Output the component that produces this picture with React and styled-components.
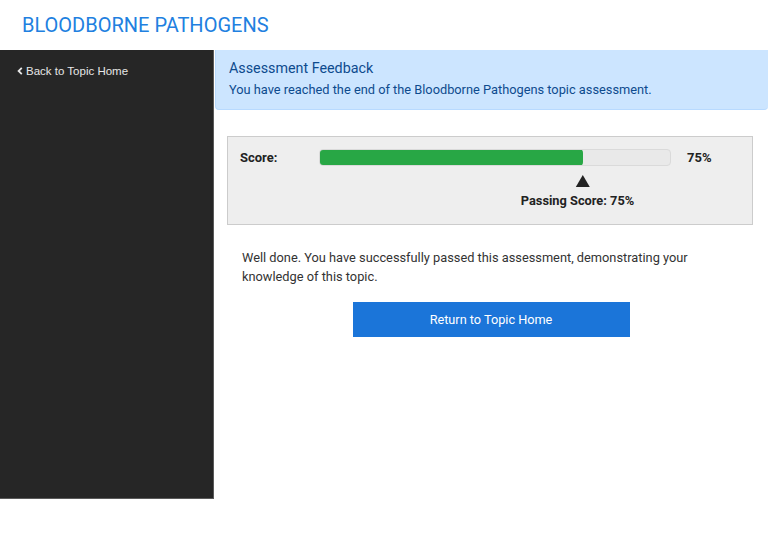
import React from "react";
import styled, { createGlobalStyle } from "styled-components";

const Global = createGlobalStyle`
  html, body { margin: 0; padding: 0; background: #ffffff; }
  body { font-family: Roboto, "Liberation Sans", Arial, sans-serif; }
  * { box-sizing: border-box; }
`;

const Page = styled.div`
  width: 768px;
  height: 548px;
  display: flex;
  flex-direction: column;
  background: #fff;
`;

const Header = styled.header`
  height: 50px;
  padding-left: 22px;
  display: flex;
  align-items: center;
`;

const Title = styled.h1`
  margin: 0;
  font-family: Roboto, sans-serif;
  font-weight: 400;
  font-size: 20px;
  line-height: 50px;
  color: #2180e0;
`;

const Main = styled.div`
  display: flex;
  height: 449px;
`;

const Sidebar = styled.nav`
  width: 214px;
  flex: none;
  background: #262626;
  border-right: 1px solid #5a5a5a;
  border-bottom: 1px solid #5a5a5a;
  padding: 10px 0 0 17px;
`;

const BackLink = styled.a`
  display: inline-flex;
  align-items: center;
  gap: 3px;
  font-family: "Liberation Sans", Arial, sans-serif;
  font-size: 11.5px;
  color: #e6e6e6;
  text-decoration: none;
  line-height: 14px;
`;

const Content = styled.main`
  flex: 1;
  display: flex;
  flex-direction: column;
  min-width: 0;
`;

const Alert = styled.div`
  height: 60px;
  margin-left: 1px;
  background: #cce5ff;
  border: 1px solid #b8daff;
  border-top: none;
  border-right: none;
  border-radius: 0 0 4px 4px;
  padding: 8px 13px 0 13px;
  color: #0e4b8e;
`;

const AlertTitle = styled.div`
  font-size: 14.3px;
  line-height: 20px;
`;

const AlertText = styled.div`
  font-size: 12.8px;
  line-height: 20px;
  margin-top: 2px;
`;

const ScorePanel = styled.section`
  margin: 26px 15px 0 13px;
  height: 89px;
  background: #eeeeee;
  border: 1px solid #cccccc;
  padding: 12px 12px 0 12px;
  display: grid;
  grid-template-columns: 63px 352px auto;
  column-gap: 16px;
  align-content: start;
`;

const Label = styled.div`
  font-size: 13px;
  font-weight: 700;
  color: #222;
  line-height: 17px;
`;

const Bar = styled.div`
  position: relative;
  height: 17px;
  background: #e9e9e9;
  border: 1px solid #dadada;
  border-radius: 4px;
  overflow: hidden;
`;

const Fill = styled.div`
  position: absolute;
  left: -1px;
  top: -1px;
  bottom: -1px;
  background: #28a745;
  border-radius: 4px;
`;

const Marker = styled.div`
  grid-column: 2;
  position: relative;
  height: 50px;
`;

const MarkerInner = styled.div`
  position: absolute;
  top: 9px;
  transform: translateX(-50%);
  display: flex;
  flex-direction: column;
  align-items: center;
`;

const Arrow = styled.div`
  width: 0;
  height: 0;
  border-left: 7px solid transparent;
  border-right: 7px solid transparent;
  border-bottom: 12px solid #222;
`;

const PassText = styled.div`
  margin-top: 6px;
  margin-right: 11px;
  font-size: 12.8px;
  font-weight: 700;
  color: #222;
  white-space: nowrap;
  line-height: 15px;
`;

const Message = styled.p`
  margin: 23px 28px 0 28px;
  font-size: 12.8px;
  line-height: 19px;
  color: #333;
  max-width: 470px;
`;

const ButtonRow = styled.div`
  display: flex;
  justify-content: center;
  margin-top: 16px;
`;

const Button = styled.button`
  width: 277px;
  height: 35px;
  border: none;
  border-radius: 0;
  background: #1b75d9;
  color: #fff;
  font-family: Roboto, sans-serif;
  font-size: 12.7px;
  cursor: pointer;
`;

const score = 75;
const passing = 75;

export default function App() {
  return (
    <Page>
      <Global />
      <Header>
        <Title>BLOODBORNE PATHOGENS</Title>
      </Header>
      <Main>
        <Sidebar>
          <BackLink href="#">
            <svg width="6" height="8" viewBox="0 0 6 8">
              <path d="M4.8 0.8 L1.6 4 L4.8 7.2" stroke="#e6e6e6" strokeWidth="1.8" fill="none" />
            </svg>
            Back to Topic Home
          </BackLink>
        </Sidebar>
        <Content>
          <Alert>
            <AlertTitle>Assessment Feedback</AlertTitle>
            <AlertText>You have reached the end of the Bloodborne Pathogens topic assessment.</AlertText>
          </Alert>
          <ScorePanel>
            <Label>Score:</Label>
            <Bar>
              <Fill style={{ width: `calc(${score}% + 1px)` }} />
            </Bar>
            <Label>{score}%</Label>
            <Marker>
              <MarkerInner style={{ left: `${passing}%` }}>
                <Arrow />
                <PassText>Passing Score: {passing}%</PassText>
              </MarkerInner>
            </Marker>
          </ScorePanel>
          <Message>
            Well done. You have successfully passed this assessment, demonstrating your knowledge of this topic.
          </Message>
          <ButtonRow>
            <Button>Return to Topic Home</Button>
          </ButtonRow>
        </Content>
      </Main>
    </Page>
  );
}
